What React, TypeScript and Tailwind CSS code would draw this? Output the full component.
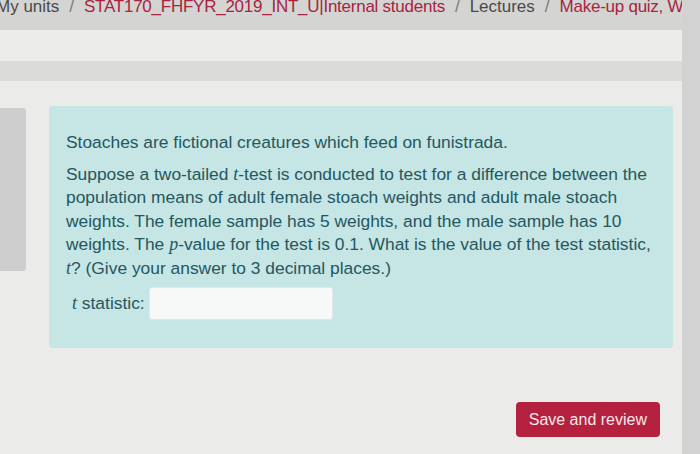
import React from "react";

const sans = { fontFamily: '"Liberation Sans", Arial, sans-serif' };

function Crumb({ children, red }: { children: React.ReactNode; red?: boolean }) {
  return (
    <span className={red ? "tracking-[-0.25px] text-[#a8233f]" : "text-[#4a4a4a]"}>{children}</span>
  );
}

function Sep() {
  return <span className="mx-[10px] text-[#7a7a7a]">/</span>;
}

function MathVar({ children }: { children: string }) {
  return (
    <i style={{ fontFamily: '"Liberation Serif", "Times New Roman", serif' }} className="text-[18px]">
      {children}
    </i>
  );
}

export default function App() {
  return (
    <div className="flex h-[454px] w-[700px] overflow-hidden bg-[#d2d2d2]" style={sans}>
      <div className="flex w-[682px] shrink-0 flex-col bg-[#ebebea]">
        {/* breadcrumb */}
        <div className="h-[30px] shrink-0 overflow-hidden whitespace-nowrap bg-[#d4d4d3] text-[17px] leading-[18px]">
          <div className="-ml-[4px] -mt-[2px]">
            <Crumb>My units</Crumb>
            <Sep />
            <Crumb red>STAT170_FHFYR_2019_INT_U|Internal students</Crumb>
            <Sep />
            <Crumb>Lectures</Crumb>
            <Sep />
            <Crumb red>Make-up quiz, Week 5</Crumb>
          </div>
        </div>
        <div className="h-[31px] shrink-0 bg-[#ececeb]" />
        <div className="h-[20px] shrink-0 bg-[#dbdbda]" />

        {/* question */}
        <div className="flex items-start gap-[23px] pt-[25px]">
          <div className="mt-[2px] h-[163px] w-[26px] shrink-0 rounded-r-[3px] bg-[#cecece]" />
          <div className="h-[242px] w-[624px] rounded-[4px] bg-[#c6e5e5] px-[17px] pt-[25px] text-[17.4px] leading-[23.5px] text-[#245760]">
            <p>Stoaches are fictional creatures which feed on funistrada.</p>
            <p className="mt-[8px]">
              Suppose a two-tailed <MathVar>t</MathVar>-test is conducted to test for a difference between the
              <br />
              population means of adult female stoach weights and adult male stoach
              <br />
              weights. The female sample has 5 weights, and the male sample has 10
              <br />
              weights. The <MathVar>p</MathVar>-value for the test is 0.1. What is the value of the test statistic,
              <br />
              <MathVar>t</MathVar>? (Give your answer to 3 decimal places.)
            </p>
            <div className="mt-[7px] flex items-center gap-[4px] pl-[6px]">
              <span>
                <MathVar>t</MathVar> statistic:
              </span>
              <div className="h-[33px] w-[184px] rounded-[3px] border border-[#dfe9e9] bg-[#f7f9f9]" />
            </div>
          </div>
        </div>

        <div className="mt-[54px] flex justify-end pr-[22px]">
          <button className="h-[35px] rounded-[4px] bg-[#b3213f] px-[13px] text-[16px] text-[#f6e6e9]">
            Save and review
          </button>
        </div>
      </div>
    </div>
  );
}
